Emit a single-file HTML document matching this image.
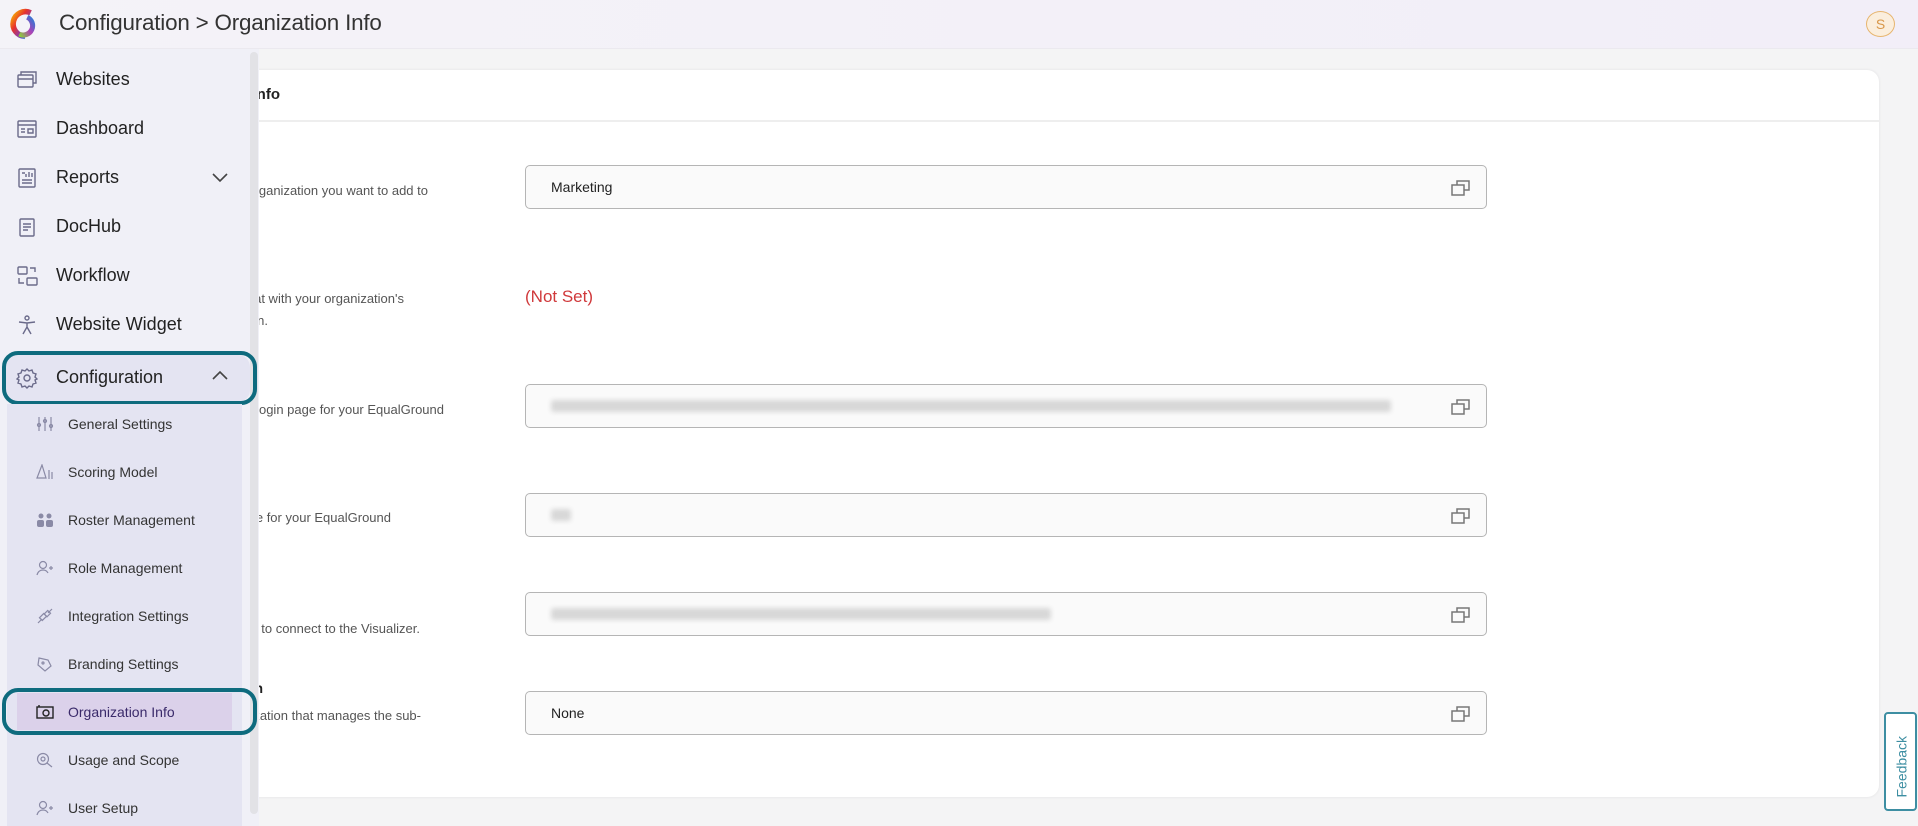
<!DOCTYPE html>
<html><head><meta charset="utf-8">
<style>
*{box-sizing:border-box;margin:0;padding:0}
body{width:1918px;height:826px;overflow:hidden;background:#f4f4f5;font-family:"Liberation Sans",sans-serif;position:relative}
.hdr{position:absolute;left:0;top:0;width:1918px;height:49px;background:linear-gradient(90deg,#f4f3f8,#f2eef8);border-bottom:1px solid #ebe9ef;z-index:3}
.title{position:absolute;left:59px;top:10px;font-size:22.4px;color:#333;letter-spacing:-0.2px}
.av{position:absolute;left:1866px;top:11px;width:29px;height:26px;border:1px solid #e7b56e;border-radius:50%;background:#fbeedd;color:#d9974a;font-size:14px;text-align:center;line-height:24px}
.card{position:absolute;left:230px;top:70px;width:1649px;height:727px;background:#fff;border-radius:12px;box-shadow:0 0 3px rgba(0,0,0,.08)}
.card .hd{position:absolute;left:0;top:50px;width:100%;border-top:2px solid #eee}
.ct{position:absolute;right:1638px;top:86px;font-size:15px;font-weight:bold;color:#222;white-space:nowrap;text-align:right}
.desc{position:absolute;font-size:13px;color:#555;line-height:22px;white-space:nowrap;text-align:right}
.inp{position:absolute;left:525px;width:962px;height:44px;border:1px solid #b5b5b5;border-radius:5px;background:#fafafa}
.inp span{position:absolute;left:25px;top:13px;font-size:14px;color:#222}
.inp .bl{position:absolute;left:25px;top:15px;height:12px;background:#d8d8d8;filter:blur(2.5px);border-radius:3px}
.inp svg{position:absolute;left:925px;top:13px}
.side{position:absolute;left:0;top:49px;width:259px;height:777px;background:#f0f0f7;z-index:2}
.sb{position:absolute;left:250px;top:52px;width:8px;height:762px;background:#e2e2e6;border-radius:4px;z-index:2}
.mi{position:absolute;left:56px;font-size:18px;color:#222;z-index:2}
.mi svg{position:absolute;left:-40px;top:0}
.sub{position:absolute;left:7px;top:404px;width:235px;height:422px;background:#e4e4f2;z-index:2}
.si{position:absolute;left:68px;font-size:14px;color:#333;z-index:2}
.si svg{position:absolute;left:-32px;top:0}
.ring{position:absolute;border:4px solid #0e6b7e;border-radius:16px;z-index:2}
.fb{position:absolute;left:1884px;top:712px;width:33px;height:99px;border:2px solid #3d8ea2;border-radius:4px;background:#fff}
.fb span{position:absolute;left:-22px;top:38px;transform:rotate(-90deg);font-size:14px;color:#3d8ea2;width:75px}
</style></head><body>
<div class="hdr">
<svg style="position:absolute;left:7px;top:6px" width="36" height="36" viewBox="0 0 32 32">
<defs><linearGradient id="g1" x1="0" y1="0" x2="1" y2="1"><stop offset="0" stop-color="#f7b500"/><stop offset=".35" stop-color="#e8322c"/><stop offset=".7" stop-color="#7b3fbf"/><stop offset="1" stop-color="#2fb7d8"/></linearGradient>
<linearGradient id="g2" x1="1" y1="0" x2="0" y2="1"><stop offset="0" stop-color="#2c7ad6"/><stop offset=".5" stop-color="#b03fb6"/><stop offset="1" stop-color="#8bcf3a"/></linearGradient></defs>
<path d="M21 6 A11 11 0 1 0 16 27" fill="none" stroke="url(#g1)" stroke-width="5"/>
<path d="M11 25 A8 8 0 1 0 18 10" fill="none" stroke="url(#g2)" stroke-width="4.5"/>
</svg>
<div class="title">Configuration &gt; Organization Info</div>
<div class="av">S</div>
</div>

<div class="card"><div class="hd"></div></div>
<div class="ct">Organization Info</div>

<div class="desc" style="right:1490px;top:180px">The name of the organization you want to add to</div>
<div class="desc" style="right:1514px;top:288px">Upload a logo that with your organization's</div>
<div class="desc" style="right:1650px;top:310px">brand information.</div>
<div class="desc" style="right:1474px;top:399px">The URL for the login page for your EqualGround</div>
<div class="desc" style="right:1527px;top:507px">The unique code for your EqualGround</div>
<div class="desc" style="right:1498px;top:618px">Key used to connect to the Visualizer.</div>
<div class="desc" style="right:1655px;top:677px;font-weight:bold;color:#222;font-size:14px">Parent Organization</div>
<div class="desc" style="right:1497px;top:705px">The parent organization that manages the sub-</div>

<div class="inp" style="top:165px"><span>Marketing</span><svg width="20" height="18" viewBox="0 0 20 18" fill="none" stroke="#777" stroke-width="1.5"><rect x="1" y="6" width="12" height="10"/><path d="M6 6V2h12v9h-5"/></svg></div>
<div style="position:absolute;left:525px;top:287px;font-size:17px;color:#d0393b">(Not Set)</div>
<div class="inp" style="top:384px"><div class="bl" style="width:840px"></div><svg width="20" height="18" viewBox="0 0 20 18" fill="none" stroke="#777" stroke-width="1.5"><rect x="1" y="6" width="12" height="10"/><path d="M6 6V2h12v9h-5"/></svg></div>
<div class="inp" style="top:493px"><div class="bl" style="width:20px"></div><svg width="20" height="18" viewBox="0 0 20 18" fill="none" stroke="#777" stroke-width="1.5"><rect x="1" y="6" width="12" height="10"/><path d="M6 6V2h12v9h-5"/></svg></div>
<div class="inp" style="top:592px"><div class="bl" style="width:500px"></div><svg width="20" height="18" viewBox="0 0 20 18" fill="none" stroke="#777" stroke-width="1.5"><rect x="1" y="6" width="12" height="10"/><path d="M6 6V2h12v9h-5"/></svg></div>
<div class="inp" style="top:691px"><span>None</span><svg width="20" height="18" viewBox="0 0 20 18" fill="none" stroke="#777" stroke-width="1.5"><rect x="1" y="6" width="12" height="10"/><path d="M6 6V2h12v9h-5"/></svg></div>

<div class="side"></div>
<div class="sb"></div>
<div class="mi" style="top:69px"><svg width="22" height="22" viewBox="0 0 22 22" fill="none" stroke="#6a6a8a" stroke-width="1.4"><rect x="2" y="6" width="15" height="12" rx="1"/><path d="M2 10h15M5 6V3h15v11h-3"/></svg>Websites</div>
<div class="mi" style="top:118px"><svg width="22" height="22" viewBox="0 0 22 22" fill="none" stroke="#6a6a8a" stroke-width="1.4"><rect x="2" y="3" width="18" height="16" rx="1"/><path d="M2 7h18M5 11h4M5 14h4M12 11h5v4h-5z"/></svg>Dashboard</div>
<div class="mi" style="top:167px"><svg width="22" height="22" viewBox="0 0 22 22" fill="none" stroke="#6a6a8a" stroke-width="1.4"><rect x="3" y="2" width="16" height="18" rx="1"/><path d="M6 13h10M6 16h10M6 6h3M10 10V7M13 10V5M16 10V6"/></svg>Reports</div>
<svg style="position:absolute;left:211px;top:171px;z-index:2" width="18" height="12" viewBox="0 0 18 12" fill="none" stroke="#444" stroke-width="1.6"><path d="M2 3l7 7 7-7"/></svg>
<div class="mi" style="top:216px"><svg width="22" height="22" viewBox="0 0 22 22" fill="none" stroke="#6a6a8a" stroke-width="1.4"><rect x="4" y="3" width="14" height="17" rx="1"/><path d="M7 8h8M7 11h8M7 14h5"/></svg>DocHub</div>
<div class="mi" style="top:265px"><svg width="24" height="22" viewBox="0 0 24 22" fill="none" stroke="#6a6a8a" stroke-width="1.4"><rect x="2" y="2" width="9" height="7" rx="1"/><rect x="11" y="13" width="10" height="7" rx="1"/><path d="M14 3h5v4M3 13v5h5"/></svg>Workflow</div>
<div class="mi" style="top:314px"><svg width="22" height="22" viewBox="0 0 22 22" fill="none" stroke="#6a6a8a" stroke-width="1.4"><circle cx="11" cy="4" r="2"/><path d="M3 8l8 1 8-1M11 9v4l-4 7M11 13l4 7"/></svg>Website Widget</div>
<div style="position:absolute;left:6px;top:355px;width:244px;height:47px;background:#e4e4f2;border-radius:12px;z-index:2"></div>
<div class="mi" style="top:367px"><svg width="22" height="22" viewBox="0 0 22 22" fill="none" stroke="#6a6a8a" stroke-width="1.4"><circle cx="11" cy="11" r="3"/><path d="M11 2l2 2 3-1 1 3 3 1-1 3 2 2-2 1 1 3-3 1-1 3-3-1-2 2-2-2-3 1-1-3-3-1 1-3-2-1 2-2-1-3 3-1 1-3 3 1z"/></svg>Configuration</div>
<svg style="position:absolute;left:211px;top:370px;z-index:2" width="18" height="12" viewBox="0 0 18 12" fill="none" stroke="#444" stroke-width="1.6"><path d="M2 9l7-7 7 7"/></svg>
<div class="ring" style="left:2px;top:351px;width:255px;height:54px"></div>

<div class="sub"></div>
<div style="position:absolute;left:17px;top:693px;width:215px;height:37px;background:#dbd1ea;z-index:2"></div>
<div class="si" style="top:416px"><svg width="18" height="16" viewBox="0 0 18 16" fill="none" stroke="#8a8aa6" stroke-width="1.2"><path d="M3 1v14M9 1v14M15 1v14"/><circle cx="3" cy="9" r="1.5"/><circle cx="9" cy="5" r="1.5"/><circle cx="15" cy="10" r="1.5"/></svg>General Settings</div>
<div class="si" style="top:464px"><svg width="18" height="16" viewBox="0 0 18 16" fill="none" stroke="#8a8aa6" stroke-width="1.2"><path d="M6 1L1 14h9zM13 6v9M16 8v7"/></svg>Scoring Model</div>
<div class="si" style="top:512px"><svg width="18" height="16" viewBox="0 0 18 16" fill="#8a8aa6"><circle cx="5" cy="4" r="2.5"/><circle cx="13" cy="4" r="2.5"/><rect x="1" y="8" width="7" height="7" rx="2"/><rect x="10" y="8" width="7" height="7" rx="2"/></svg>Roster Management</div>
<div class="si" style="top:560px"><svg width="18" height="16" viewBox="0 0 18 16" fill="none" stroke="#8a8aa6" stroke-width="1.2"><circle cx="7" cy="5" r="3.5"/><path d="M1 15c1-4 4-5 6-5s4 1 5 3M15 6v4M13 8h4"/></svg>Role Management</div>
<div class="si" style="top:608px"><svg width="18" height="16" viewBox="0 0 18 16" fill="none" stroke="#8a8aa6" stroke-width="1.2"><path d="M2 15l4-4M16 1l-4 4"/><rect x="4" y="7" width="6" height="4" transform="rotate(-45 7 9)"/><rect x="9" y="4" width="5" height="4" transform="rotate(-45 11 6)"/></svg>Integration Settings</div>
<div class="si" style="top:656px"><svg width="18" height="16" viewBox="0 0 18 16" fill="none" stroke="#8a8aa6" stroke-width="1.2"><path d="M3 2l9 2 3 6-6 5-7-6z"/><circle cx="7" cy="7" r="1"/></svg>Branding Settings</div>
<div class="si" style="top:704px;color:#3a2a6a"><svg width="18" height="16" viewBox="0 0 18 16" fill="none" stroke="#222" stroke-width="1.4"><rect x="1" y="3" width="16" height="11"/><circle cx="10" cy="9" r="3"/><path d="M3 3V1"/></svg>Organization Info</div>
<div class="ring" style="left:2px;top:688px;width:255px;height:47px"></div>
<div class="si" style="top:752px"><svg width="18" height="16" viewBox="0 0 18 16" fill="none" stroke="#8a8aa6" stroke-width="1.2"><circle cx="7" cy="7" r="5.5"/><circle cx="7" cy="7" r="2"/><path d="M11 11l5 4"/></svg>Usage and Scope</div>
<div class="si" style="top:800px"><svg width="18" height="16" viewBox="0 0 18 16" fill="none" stroke="#8a8aa6" stroke-width="1.2"><circle cx="7" cy="5" r="3.5"/><path d="M1 15c1-4 4-5 6-5s4 1 5 3M15 6v4M13 8h4"/></svg>User Setup</div>

<div class="fb"><span>Feedback</span></div>
</body></html>
